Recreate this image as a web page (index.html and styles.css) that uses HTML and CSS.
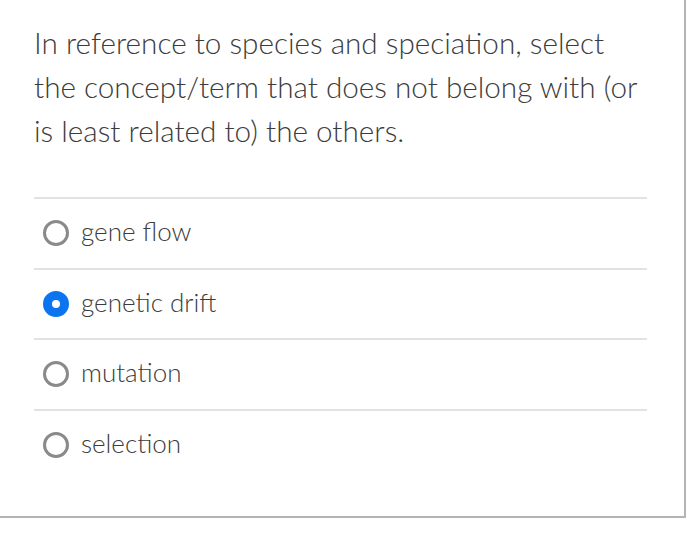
FILE: index.html
```html
<!DOCTYPE html>
<html>
<head>
<meta charset="utf-8">
<link rel="stylesheet" href="styles.css">
</head>
<body>
<div class="panel">
  <div class="question">In reference to species and speciation, select the concept/term that does not belong with (or is least related to) the others.</div>
  <div class="answers">
    <div class="answer"><span class="radio"></span><span class="label">gene flow</span></div>
    <div class="answer"><span class="radio checked"></span><span class="label">genetic drift</span></div>
    <div class="answer"><span class="radio"></span><span class="label">mutation</span></div>
    <div class="answer"><span class="radio"></span><span class="label">selection</span></div>
  </div>
</div>
</body>
</html>
```

FILE: styles.css
```css
html, body {
  margin: 0;
  padding: 0;
  background: #ffffff;
}
body {
  font-family: Lato, "Open Sans", sans-serif;
  color: #3c3c3c;
}
.panel {
  box-sizing: border-box;
  width: 686px;
  height: 518px;
  border-right: 2px solid #b4b4b4;
  border-bottom: 2px solid #b4b4b4;
  padding: 21px 0 0 34px;
}
.question {
  width: 611px;
  font-size: 29.7px;
  line-height: 44px;
  font-weight: 300;
}
.answers {
  margin-top: 44px;
  width: 613px;
}
.answer {
  box-sizing: border-box;
  height: 70.5px;
  border-top: 2px solid #e2e2e2;
  display: flex;
  align-items: center;
  padding-left: 9px;
  gap: 12px;
}
.radio {
  box-sizing: border-box;
  width: 26px;
  height: 26px;
  border-radius: 50%;
  border: 3px solid #8a8a8a;
  flex: none;
}
.radio.checked {
  border: 9px solid #0b74ee;
  background: #ffffff;
}
.label {
  font-size: 26px;
  line-height: 30px;
  font-weight: 300;
  margin-top: -4px;
}
```
